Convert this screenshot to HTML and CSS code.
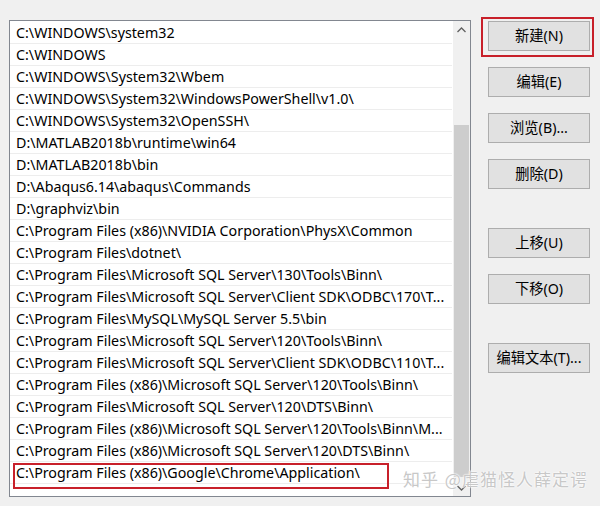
FILE: index.html
```html
<!DOCTYPE html>
<html>
<head>
<meta charset="utf-8">
<link rel="stylesheet" href="styles.css">
</head>
<body>
<div class="dialog">
  <div class="listbox">
    <ul class="rows">
      <li>C:\WINDOWS\system32</li>
      <li>C:\WINDOWS</li>
      <li>C:\WINDOWS\System32\Wbem</li>
      <li>C:\WINDOWS\System32\WindowsPowerShell\v1.0\</li>
      <li>C:\WINDOWS\System32\OpenSSH\</li>
      <li>D:\MATLAB2018b\runtime\win64</li>
      <li>D:\MATLAB2018b\bin</li>
      <li>D:\Abaqus6.14\abaqus\Commands</li>
      <li>D:\graphviz\bin</li>
      <li>C:\Program Files (x86)\NVIDIA Corporation\PhysX\Common</li>
      <li>C:\Program Files\dotnet\</li>
      <li>C:\Program Files\Microsoft SQL Server\130\Tools\Binn\</li>
      <li>C:\Program Files\Microsoft SQL Server\Client SDK\ODBC\170\T...</li>
      <li>C:\Program Files\MySQL\MySQL Server 5.5\bin</li>
      <li>C:\Program Files\Microsoft SQL Server\120\Tools\Binn\</li>
      <li>C:\Program Files\Microsoft SQL Server\Client SDK\ODBC\110\T...</li>
      <li>C:\Program Files (x86)\Microsoft SQL Server\120\Tools\Binn\</li>
      <li>C:\Program Files\Microsoft SQL Server\120\DTS\Binn\</li>
      <li>C:\Program Files (x86)\Microsoft SQL Server\120\Tools\Binn\M...</li>
      <li>C:\Program Files (x86)\Microsoft SQL Server\120\DTS\Binn\</li>
      <li>C:\Program Files (x86)\Google\Chrome\Application\</li>
    </ul>
    <div class="scrollbar">
      <div class="arrow">
        <svg width="9" height="6" viewBox="0 0 9 6"><path d="M0.5 5 L4.5 1 L8.5 5" fill="none" stroke="#606060" stroke-width="1.3"/></svg>
      </div>
      <div class="track"><div class="thumb"></div></div>
      <div class="arrow">
        <svg width="9" height="6" viewBox="0 0 9 6"><path d="M0.5 1 L4.5 5 L8.5 1" fill="none" stroke="#606060" stroke-width="1.3"/></svg>
      </div>
    </div>
    <div class="mark mark-row"></div>
  </div>
  <div class="buttons">
    <div class="btn-wrap">
      <button class="btn">新建(N)</button>
      <div class="mark mark-btn"></div>
    </div>
    <button class="btn">编辑(E)</button>
    <button class="btn">浏览(B)...</button>
    <button class="btn">删除(D)</button>
    <button class="btn gap">上移(U)</button>
    <button class="btn">下移(O)</button>
    <button class="btn gap">编辑文本(T)...</button>
  </div>
  <div class="watermark">知乎 @虐猫怪人薛定谔</div>
</div>
</body>
</html>
```

FILE: styles.css
```css
html, body {
  margin: 0;
  padding: 0;
}
body {
  background: #f0f0f0;
  width: 600px;
  height: 506px;
  overflow: hidden;
  font-family: "Noto Sans", "Noto Sans CJK SC", sans-serif;
}
.dialog {
  position: relative;
  display: flex;
  align-items: flex-start;
  padding: 20px 0 0 9px;
}
.listbox {
  position: relative;
  display: flex;
  width: 460px;
  height: 475px;
  border: 1px solid #828790;
  background: #ffffff;
}
.rows {
  list-style: none;
  margin: 0;
  padding: 1px 0 0 0;
  width: 442px;
  overflow: hidden;
}
.rows li {
  height: 21px;
  line-height: 21px;
  border-bottom: 1px solid #ededed;
  padding: 0 0 0 6px;
  font-size: 14.25px;
  color: #000;
  white-space: nowrap;
}
.scrollbar {
  width: 17px;
  display: flex;
  flex-direction: column;
  background: #f0f0f0;
  margin-left: 1px;
}
.arrow {
  height: 17px;
  display: flex;
  align-items: center;
  justify-content: center;
}
.track {
  flex: 1;
  display: flex;
  flex-direction: column;
  justify-content: flex-end;
}
.thumb {
  height: 352px;
  margin: 0 1px 2px 1px;
  background: #cdcdcd;
}
.buttons {
  display: flex;
  flex-direction: column;
  margin-left: 17px;
  padding-top: 1px;
}
.btn {
  display: block;
  width: 102px;
  height: 30px;
  margin-bottom: 16px;
  border: 1px solid #adadad;
  background: #e1e1e1;
  font-family: "Noto Sans", "Noto Sans CJK SC", sans-serif;
  font-size: 14.25px;
  color: #000;
  padding: 0 0 4px 0;
}
.btn.gap {
  margin-top: 23px;
}
.btn-wrap {
  position: relative;
}
.mark {
  position: absolute;
  border: 2px solid #c8202a;
  box-sizing: border-box;
}
.mark-btn {
  left: -7px;
  top: -4px;
  width: 113px;
  height: 40px;
}
.mark-row {
  left: 3px;
  top: 442px;
  width: 376px;
  height: 26px;
}
.watermark {
  position: absolute;
  left: 403px;
  top: 466px;
  font-family: "Noto Sans CJK SC", sans-serif;
  font-size: 17px;
  color: #c8c8c8;
  text-shadow: 0 0 2px #fff, 0 0 2px #fff, 0 0 1px #fff;
  letter-spacing: 1px;
  word-spacing: 1px;
}
```
